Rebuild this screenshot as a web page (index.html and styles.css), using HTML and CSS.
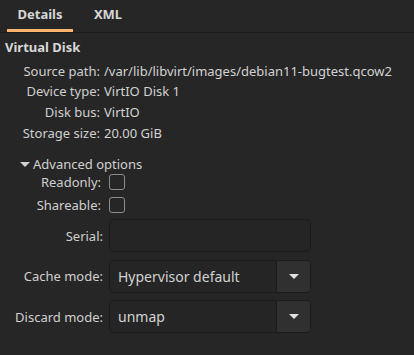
FILE: index.html
```html
<!DOCTYPE html>
<html lang="en">
<head>
    <meta charset="UTF-8">
    <title>Virtual Disk</title>
    <link rel="stylesheet" href="styles.css">
</head>
<body>
    <div class="tabs">
        <div class="tab active">Details</div>
        <div class="tab">XML</div>
    </div>

    <div class="panel">
        <h2>Virtual Disk</h2>
        <div class="props">
            <span class="label">Source path:</span><span>/var/lib/libvirt/images/debian11-bugtest.qcow2</span>
            <span class="label">Device type:</span><span>VirtIO Disk 1</span>
            <span class="label">Disk bus:</span><span>VirtIO</span>
            <span class="label">Storage size:</span><span>20.00 GiB</span>
        </div>

        <div class="expander">
            <span class="arrow"></span>Advanced options
        </div>
        <div class="advanced">
            <span class="label">Readonly:</span><span class="check"></span>
            <span class="label">Shareable:</span><span class="check"></span>
        </div>
        <div class="fields">
            <span class="label">Serial:</span>
            <div class="entry"></div>
            <span class="label">Cache mode:</span>
            <div class="combo"><span class="value">Hypervisor default</span><span class="drop"><span class="tri"></span></span></div>
            <span class="label">Discard mode:</span>
            <div class="combo"><span class="value">unmap</span><span class="drop"><span class="tri"></span></span></div>
        </div>
    </div>
</body>
</html>
```

FILE: styles.css
```css
body {
    margin: 0;
    background-color: #262626;
    color: #d2d2d2;
    font-family: 'Noto Sans', sans-serif;
    font-size: 13px;
    width: 414px;
    height: 355px;
    overflow: hidden;
}
.tabs {
    display: flex;
    height: 32px;
    padding-left: 7px;
    gap: 2px;
    border-bottom: 1px solid #1c1c1c;
}
.tab {
    font-weight: 700;
    color: #d6d6d6;
    width: 66px;
    text-align: center;
    line-height: 29px;
    box-sizing: border-box;
}
.tab.active {
    border-bottom: 3px solid #ffb56b;
}
.panel {
    padding: 4px 0 0 5px;
}
h2 {
    margin: 0;
    font-size: 13px;
    font-weight: 700;
    color: #d8d8d8;
    line-height: 20px;
}
.props {
    display: grid;
    grid-template-columns: 95px auto;
    column-gap: 4px;
    line-height: 20.7px;
    margin-top: 3.5px;
}
.label {
    text-align: right;
    color: #cfcfcf;
}
.expander {
    margin: 13px 0 0 15px;
    line-height: 16px;
    display: flex;
    align-items: center;
}
.arrow {
    width: 0;
    height: 0;
    border-left: 5px solid transparent;
    border-right: 5px solid transparent;
    border-top: 5px solid #d0d0d0;
    margin-right: 3px;
}
.advanced {
    display: grid;
    grid-template-columns: 96px 16px;
    column-gap: 8px;
    row-gap: 7px;
    margin-top: 2px;
    line-height: 16px;
    align-items: center;
}
.check {
    width: 14px;
    height: 14px;
    border: 1px solid #8c8c8c;
    border-radius: 3px;
}
.fields {
    display: grid;
    grid-template-columns: 98px 202px;
    column-gap: 6px;
    row-gap: 7.5px;
    margin-top: 6px;
    align-items: center;
}
.entry,
.combo {
    height: 31px;
    border: 1px solid #1b1b1b;
    border-radius: 5px;
    background-color: #252525;
}
.combo {
    display: flex;
    overflow: hidden;
}
.value {
    flex: 1;
    line-height: 31px;
    padding-left: 8px;
    font-size: 14px;
}
.drop {
    width: 33px;
    background-color: #303030;
    border-left: 1px solid #1b1b1b;
    display: flex;
    align-items: center;
    justify-content: center;
}
.tri {
    width: 0;
    height: 0;
    border-left: 5px solid transparent;
    border-right: 5px solid transparent;
    border-top: 5px solid #e0e0e0;
}
```
